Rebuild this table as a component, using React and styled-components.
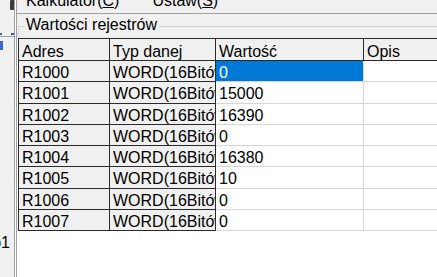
import React from "react";
import styled, { createGlobalStyle } from "styled-components";

const Global = createGlobalStyle`
  html, body { margin: 0; padding: 0; background: #f0f0f0; }
  body {
    font-family: "Liberation Sans", Arial, sans-serif;
    font-size: 16px;
    color: #000;
  }
`;

const Screen = styled.div`
  display: flex;
  width: 437px;
  height: 277px;
  overflow: hidden;
  background: #f0f0f0;
`;

/* sliver of the window lying behind */
const BackStrip = styled.div`
  width: 14px;
  flex: none;
  display: flex;
  flex-direction: column;
  overflow: hidden;
`;

const ToolGlyph = styled.div`
  align-self: flex-end;
  width: 4px;
  height: 10px;
  background: #3c3c3c;
  border-radius: 1px 0 0 1px;
`;

const DashRow = styled.div`
  display: flex;
  justify-content: space-between;
  height: 2px;
  margin-top: 23px;
`;

const Dash = styled.span`
  width: ${(p) => p.$w}px;
  background: #2f62d8;
`;

const Rule = styled.div`
  height: 1px;
  margin-top: 1px;
  background: #a0a0a0;
`;

const BlueMark = styled.div`
  width: 3px;
  height: 9px;
  margin-top: 4px;
  background: #3468d6;
`;

const Caption = styled.div`
  margin-top: auto;
  margin-bottom: 25px;
  padding-right: 4px;
  line-height: 18px;
  text-align: right;
  white-space: nowrap;
  direction: rtl;
`;

const WindowEdge = styled.div`
  width: 1px;
  flex: none;
  background: #ffffff;
  border-left: 1px solid #a0a0a0;
  border-right: 1px solid #a0a0a0;
`;

const Content = styled.div`
  flex: 1;
  min-width: 0;
  display: flex;
  flex-direction: column;
`;

const MenuBar = styled.div`
  box-sizing: border-box;
  height: 14px;
  flex: none;
  display: flex;
  padding-left: 9px;
  overflow: hidden;
  border-bottom: 1px solid #a0a0a0;
`;

const MenuItem = styled.span`
  margin-top: -8px;
  line-height: 18px;
  white-space: nowrap;
  & + & { margin-left: 33px; }
  u { text-decoration-thickness: 1px; text-underline-offset: 1px; }
`;

const GroupHead = styled.div`
  height: 24px;
  flex: none;
  display: flex;
  align-items: flex-start;
  padding-left: 1px;
`;

const FrameCorner = styled.div`
  width: 5px;
  height: 12px;
  margin-top: 12px;
  border-top: 1px solid #d4d4d4;
  border-left: 1px solid #d4d4d4;
`;

const GroupLabel = styled.div`
  padding: 2px 2px 0 2px;
  line-height: 18px;
  white-space: nowrap;
`;

const FrameLine = styled.div`
  flex: 1;
  margin-top: 12px;
  border-top: 1px solid #d4d4d4;
`;

const GridPanel = styled.div`
  flex: 1;
  background: #ffffff;
  padding-left: 1px;
`;

const Table = styled.div`
  display: grid;
  grid-template-columns: 91px 106px 148px 1fr;
  border-top: 1px solid #2a2a2a;
  border-left: 1px solid #2a2a2a;
`;

const dark = "#2a2a2a";
const light = "#d6d6d6";

const Cell = styled.div`
  box-sizing: border-box;
  height: ${(p) => (p.$kind === "head" ? 22 : 21.25)}px;
  padding: ${(p) => (p.$kind === "head" ? 4 : 3)}px 0 0 3px;
  line-height: 18px;
  white-space: nowrap;
  overflow: hidden;
  background: ${(p) =>
    p.$selected ? "#0078d7" : p.$kind === "value" ? "#ffffff" : "#f0f0f0"};
  color: ${(p) => (p.$selected ? "#ffffff" : "#000000")};
  border-bottom: 1px solid ${(p) => (p.$kind === "value" ? light : dark)};
  border-right: ${(p) =>
    p.$last ? "none" : `1px solid ${p.$kind === "value" ? light : dark}`};
`;

const columns = ["Adres", "Typ danej", "Wartość", "Opis"];

const registers = [
  { addr: "R1000", value: "0" },
  { addr: "R1001", value: "15000" },
  { addr: "R1002", value: "16390" },
  { addr: "R1003", value: "0" },
  { addr: "R1004", value: "16380" },
  { addr: "R1005", value: "10" },
  { addr: "R1006", value: "0" },
  { addr: "R1007", value: "0" },
];

export default function App() {
  return (
    <>
      <Global />
      <Screen>
        <BackStrip>
          <ToolGlyph />
          <DashRow>
            <Dash $w={2} />
            <Dash $w={3} />
          </DashRow>
          <Rule />
          <BlueMark />
          <Caption>o1</Caption>
        </BackStrip>
        <WindowEdge />
        <Content>
          <MenuBar>
            <MenuItem>
              Kalkulator(<u>C</u>)
            </MenuItem>
            <MenuItem>
              Ustaw(<u>S</u>)
            </MenuItem>
          </MenuBar>
          <GroupHead>
            <FrameCorner />
            <GroupLabel>Wartości rejestrów</GroupLabel>
            <FrameLine />
          </GroupHead>
          <GridPanel>
            <Table>
              {columns.map((c, i) => (
                <Cell key={c} $kind="head" $last={i === 3}>
                  {c}
                </Cell>
              ))}
              {registers.map((r, i) => (
                <React.Fragment key={r.addr}>
                  <Cell $kind="key">{r.addr}</Cell>
                  <Cell $kind="key">WORD(16Bitów)</Cell>
                  <Cell $kind="value" $selected={i === 0}>
                    {r.value}
                  </Cell>
                  <Cell $kind="value" $last />
                </React.Fragment>
              ))}
            </Table>
          </GridPanel>
        </Content>
      </Screen>
    </>
  );
}
